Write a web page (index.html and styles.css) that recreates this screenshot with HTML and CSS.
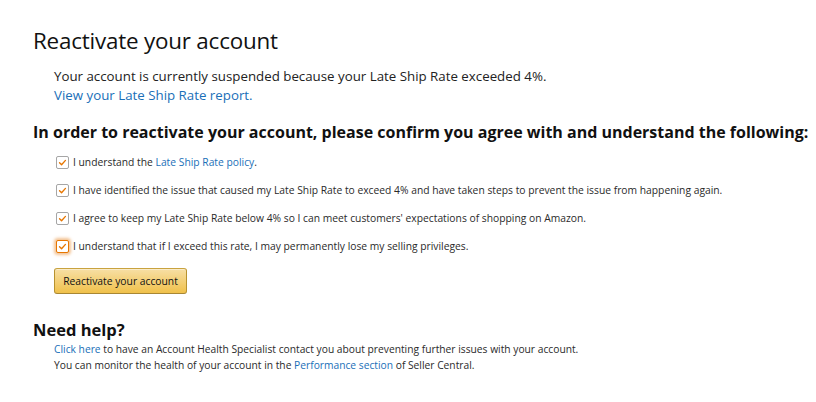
FILE: index.html
```html
<!DOCTYPE html>
<html>
<head>
<meta charset="utf-8">
<link rel="stylesheet" href="styles.css">
</head>
<body>
<div class="page">
  <h1 class="title">Reactivate your account</h1>
  <div class="intro">
    <div>Your account is currently suspended because your Late Ship Rate exceeded 4%.</div>
    <a class="link" href="#">View your Late Ship Rate report.</a>
  </div>
  <h2 class="heading">In order to reactivate your account, please confirm you agree with and understand the following:</h2>
  <ul class="checks">
    <li class="check"><span class="box"><svg viewBox="0 0 13 13" width="13" height="13"><path d="M3 6.8 L5.4 9.2 L10 4" fill="none" stroke="#e77600" stroke-width="1.6" stroke-linecap="round" stroke-linejoin="round"/></svg></span><span>I understand the <a class="link" href="#">Late Ship Rate policy</a>.</span></li>
    <li class="check"><span class="box"><svg viewBox="0 0 13 13" width="13" height="13"><path d="M3 6.8 L5.4 9.2 L10 4" fill="none" stroke="#e77600" stroke-width="1.6" stroke-linecap="round" stroke-linejoin="round"/></svg></span><span>I have identified the issue that caused my Late Ship Rate to exceed 4% and have taken steps to prevent the issue from happening again.</span></li>
    <li class="check"><span class="box"><svg viewBox="0 0 13 13" width="13" height="13"><path d="M3 6.8 L5.4 9.2 L10 4" fill="none" stroke="#e77600" stroke-width="1.6" stroke-linecap="round" stroke-linejoin="round"/></svg></span><span>I agree to keep my Late Ship Rate below 4% so I can meet customers' expectations of shopping on Amazon.</span></li>
    <li class="check"><span class="box focus"><svg viewBox="0 0 13 13" width="13" height="13"><path d="M3 6.8 L5.4 9.2 L10 4" fill="none" stroke="#e77600" stroke-width="1.6" stroke-linecap="round" stroke-linejoin="round"/></svg></span><span>I understand that if I exceed this rate, I may permanently lose my selling privileges.</span></li>
  </ul>
  <button class="btn" type="button">Reactivate your account</button>
  <h2 class="help-title">Need help?</h2>
  <div class="help">
    <div><a class="link" href="#">Click here</a> to have an Account Health Specialist contact you about preventing further issues with your account.</div>
    <div>You can monitor the health of your account in the <a class="link" href="#">Performance section</a> of Seller Central.</div>
  </div>
</div>
</body>
</html>
```
FILE: styles.css
```css
html, body {
  margin: 0;
  padding: 0;
  background: #ffffff;
}
body {
  font-family: "Open Sans", "Liberation Sans", sans-serif;
  color: #111111;
}
.page {
  padding: 26px 0 0 33px;
}
.title {
  margin: 0;
  font-size: 22.4px;
  font-weight: 400;
  line-height: 30px;
  color: #111;
  letter-spacing: -0.2px;
}
.intro {
  margin: 11px 0 0 21px;
  font-size: 13.3px;
  line-height: 19px;
  color: #222;
}
.link {
  color: #1a6fb8;
  text-decoration: none;
}
.heading {
  margin: 15px 0 0 0;
  font-size: 16px;
  font-weight: 700;
  line-height: 24px;
  color: #111;
  letter-spacing: 0;
  white-space: nowrap;
}
.checks {
  list-style: none;
  margin: 4px 0 0 23px;
  padding: 0;
}
.check {
  display: flex;
  align-items: center;
  gap: 4px;
  height: 28px;
  font-size: 10.3px;
  color: #2a2a2a;
}
.box {
  box-sizing: border-box;
  width: 13px;
  height: 13px;
  border: 1px solid #a6a6a6;
  border-radius: 2px;
  background: #fff;
  display: flex;
  align-items: center;
  justify-content: center;
  flex: none;
}
.box svg {
  display: block;
  width: 11px;
  height: 11px;
}
.box.focus {
  border-color: #e77600;
  box-shadow: 0 0 3px 2px rgba(228, 121, 17, 0.45);
}
.btn {
  margin: 8px 0 0 21px;
  width: 133px;
  height: 26px;
  padding: 0;
  font-family: inherit;
  font-size: 10.3px;
  color: #111;
  background: linear-gradient(#f7dfa5, #f0c14b);
  border: 1px solid;
  border-color: #c9a33e #b7922f #a88734;
  border-radius: 3px;
  box-shadow: 0 1px 0 rgba(255,255,255,0.4) inset;
}
.help-title {
  margin: 25px 0 0 0;
  font-size: 16.5px;
  font-weight: 700;
  line-height: 22px;
  color: #111;
}
.help {
  margin: 0 0 0 21px;
  font-size: 10.25px;
  line-height: 16px;
  color: #2a2a2a;
}
```
